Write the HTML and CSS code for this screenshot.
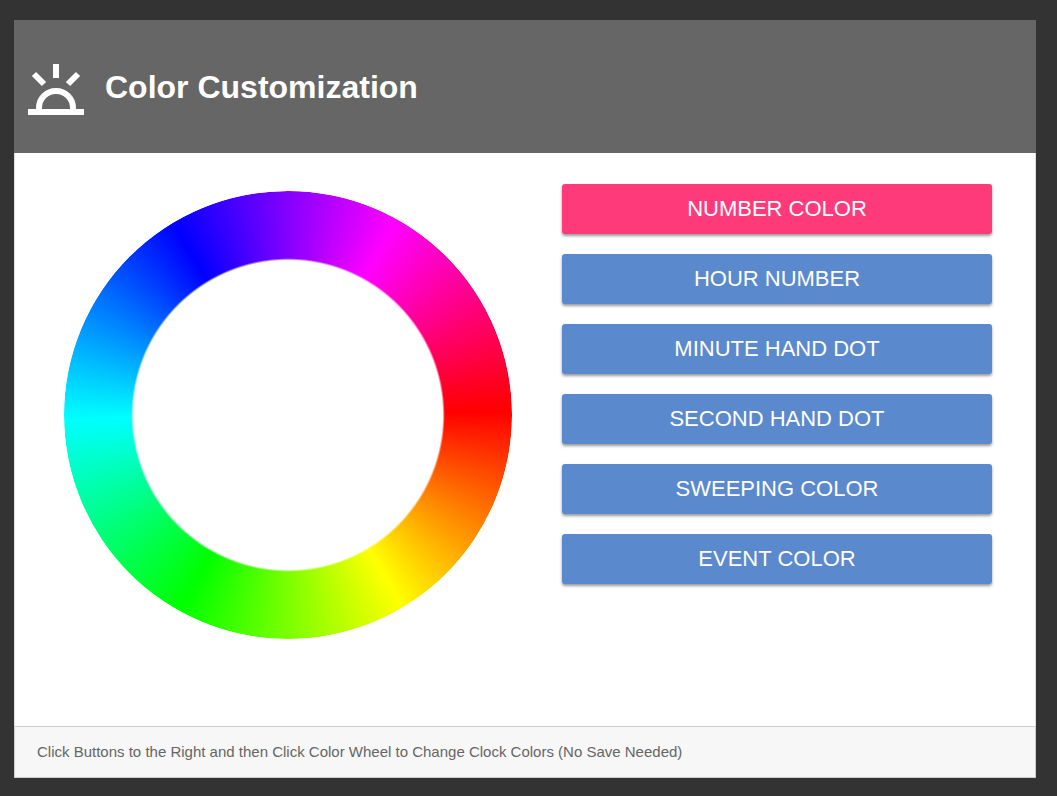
FILE: index.html
```
<!DOCTYPE html>
<html lang="en">
<head>
    <meta charset="UTF-8">
    <meta name="viewport" content="width=device-width, initial-scale=1.0">
    <title>Color Customization</title>
    <link rel="stylesheet" href="styles.css">
</head>
<body>
    <div class="panel">
        <header class="panel-header">
            <svg class="header-icon" viewBox="0 0 56 52" aria-hidden="true">
                <path d="M28 0v14M6 10l10 10M50 10L40 20" />
                <path d="M11 45v-1a17 17 0 0 1 34 0v1" />
                <path d="M0 48h56" />
            </svg>
            <h1>Color Customization</h1>
        </header>

        <main class="panel-body">
            <div class="color-wheel" id="color-wheel" role="img" aria-label="Color wheel"></div>
            <div class="button-list">
                <button type="button" class="btn active">NUMBER COLOR</button>
                <button type="button" class="btn">HOUR NUMBER</button>
                <button type="button" class="btn">MINUTE HAND DOT</button>
                <button type="button" class="btn">SECOND HAND DOT</button>
                <button type="button" class="btn">SWEEPING COLOR</button>
                <button type="button" class="btn">EVENT COLOR</button>
            </div>
        </main>

        <footer class="panel-footer">
            <p>Click Buttons to the Right and then Click Color Wheel to Change Clock Colors (No Save Needed)</p>
        </footer>
    </div>
</body>
</html>
```
FILE: styles.css
```
* {
    margin: 0;
    padding: 0;
    box-sizing: border-box;
}

body {
    display: flex;
    min-height: 100vh;
    padding: 20px 21px 18px 14px;
    background-color: #333;
    font-family: "Liberation Sans", Arial, sans-serif;
}

.panel {
    flex: 1;
    display: flex;
    flex-direction: column;
    background: #fff;
}

/* Header */
.panel-header {
    display: flex;
    align-items: flex-start;
    gap: 21px;
    padding: 40px 14px 37px;
    background: #666;
    color: #fff;
}

.panel-header h1 {
    font-size: 32px;
    line-height: 54px;
}

.header-icon {
    width: 56px;
    height: 52px;
    margin-top: 4px;
    fill: none;
    stroke: #fff;
    stroke-width: 6;
}

/* Wheel and buttons */
.panel-body {
    flex: 1;
    display: flex;
    align-items: flex-start;
    gap: 50px;
    padding: 31px 43px 31px 49px;
    border: 1px solid #ddd;
    border-width: 0 1px;
}

.color-wheel {
    flex: 0 1 448px;
    aspect-ratio: 1;
    margin-top: 7px;
    border-radius: 50%;
    background: conic-gradient(from 89deg, #f00, #ff0, #0f0, #0ff, #00f, #f0f, #f00);
    -webkit-mask: radial-gradient(closest-side, transparent 69%, #000 70%);
    mask: radial-gradient(closest-side, transparent 69%, #000 70%);
    cursor: crosshair;
}

.button-list {
    flex: 1;
    display: flex;
    flex-direction: column;
    gap: 20px;
}

.btn {
    height: 50px;
    border: none;
    border-radius: 3px;
    background: #5b89cd;
    box-shadow: 0 2px 3px rgba(0, 0, 0, 0.4);
    color: #fff;
    font-family: inherit;
    font-size: 22px;
    cursor: pointer;
}

.btn.active {
    background: #ff3a7b;
}

/* Footer */
.panel-footer {
    padding: 0 22px;
    border: 1px solid #ccc;
    background: #f7f7f7;
    color: #666;
    font-size: 15px;
    line-height: 50px;
}
```
